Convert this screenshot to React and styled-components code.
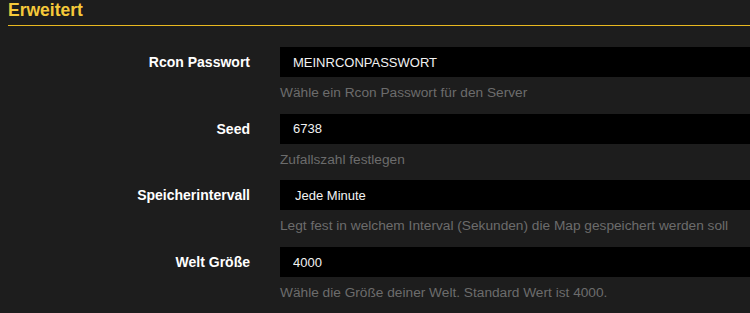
import React from "react";
import styled, { createGlobalStyle } from "styled-components";

const Global = createGlobalStyle`
  html, body { margin: 0; padding: 0; background: #1d1d1d; overflow: hidden; }
  body { font-family: "Liberation Sans", Arial, sans-serif; }
`;

const Page = styled.div`
  width: 750px;
  height: 313px;
  padding-left: 8px;
  box-sizing: border-box;
  background: #1d1d1d;
  overflow: hidden;
`;

const Heading = styled.h2`
  margin: 0;
  padding: 0 0 5px;
  height: 20px;
  line-height: 20px;
  font-size: 17.5px;
  font-weight: bold;
  color: #f5c93a;
  border-bottom: 1.5px solid #e8b820;
`;

const Form = styled.div`
  display: grid;
  grid-template-columns: 242px 1fr;
  column-gap: 30px;
  padding-top: 21px;
`;

const Label = styled.label`
  display: flex;
  align-items: center;
  justify-content: flex-end;
  height: 30px;
  font-size: 14px;
  font-weight: bold;
  color: #ffffff;
`;

const Field = styled.div`
  display: flex;
  flex-direction: column;
`;

const TextInput = styled.input`
  box-sizing: border-box;
  height: 30px;
  width: 100%;
  border: none;
  outline: none;
  background: #000;
  color: #f2f2f2;
  font-family: "Liberation Sans", Arial, sans-serif;
  font-size: 13px;
  padding: 0 0 0 ${(p) => (p.$select ? 15 : 13)}px;
  margin: 0;
  appearance: none;
  border-radius: 0;
`;

const Help = styled.div`
  padding: 7px 0 11.7px;
  line-height: 18px;
  font-size: 13.7px;
  color: #6c6c6c;
  white-space: nowrap;
`;

const rows = [
  { label: "Rcon Passwort", value: "MEINRCONPASSWORT", help: "Wähle ein Rcon Passwort für den Server" },
  { label: "Seed", value: "6738", help: "Zufallszahl festlegen" },
  { label: "Speicherintervall", value: "Jede Minute", select: true, help: "Legt fest in welchem Interval (Sekunden) die Map gespeichert werden soll" },
  { label: "Welt Größe", value: "4000", help: "Wähle die Größe deiner Welt. Standard Wert ist 4000." },
];

export default function App() {
  return (
    <Page>
      <Global />
      <Heading>Erweitert</Heading>
      <Form>
        {rows.map((r) => (
          <React.Fragment key={r.label}>
            <Label>{r.label}</Label>
            <Field>
              {r.select ? (
                <TextInput as="select" $select defaultValue={r.value}>
                  <option>{r.value}</option>
                </TextInput>
              ) : (
                <TextInput type="text" defaultValue={r.value} />
              )}
              <Help>{r.help}</Help>
            </Field>
          </React.Fragment>
        ))}
      </Form>
    </Page>
  );
}
